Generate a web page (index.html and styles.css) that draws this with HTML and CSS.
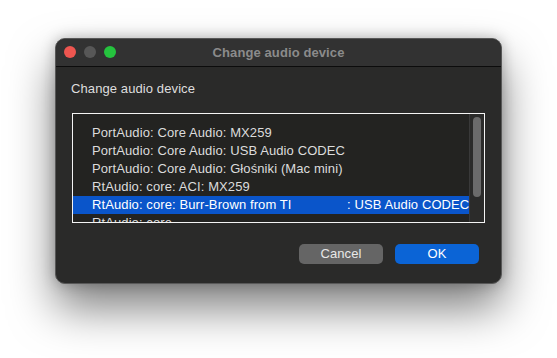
FILE: index.html
```html
<!DOCTYPE html>
<html lang="en">
<head>
    <meta charset="UTF-8">
    <title>Change audio device</title>
    <link rel="stylesheet" href="styles.css">
</head>
<body>
<div class="window">
    <div class="titlebar">
        <div class="lights">
            <span class="light close"></span>
            <span class="light min"></span>
            <span class="light zoom"></span>
        </div>
        <div class="title">Change audio device</div>
    </div>
    <div class="content">
        <div class="label">Change audio device</div>
        <div class="listbox">
            <ul class="list">
                <li>PortAudio: Core Audio: MX259</li>
                <li>PortAudio: Core Audio: USB Audio CODEC</li>
                <li>PortAudio: Core Audio: Głośniki (Mac mini)</li>
                <li>RtAudio: core: ACI: MX259</li>
                <li class="selected"><span class="col">RtAudio: core: Burr-Brown from TI</span>: USB Audio CODEC</li>
                <li>RtAudio: core</li>
            </ul>
            <div class="track"><div class="thumb"></div></div>
        </div>
        <div class="buttons">
            <a href="javascript:;" class="btn cancel">Cancel</a>
            <a href="javascript:;" class="btn ok">OK</a>
        </div>
    </div>
</div>
</body>
</html>
```

FILE: styles.css
```css
* {
    margin: 0;
    padding: 0;
    box-sizing: border-box;
}

ul {
    list-style: none;
}

a {
    text-decoration: none;
}

html, body {
    height: 100%;
}

body {
    background: #fff;
    font-family: "Liberation Sans", Arial, sans-serif;
    font-size: 13px;
    letter-spacing: 0.1px;
    padding: 38px 0 0 55px;
}

.window {
    width: 447px;
    height: 246px;
    background: #2a2a29;
    border: 1px solid #585858;
    border-radius: 10px;
    box-shadow: 0 24px 45px rgba(0, 0, 0, 0.5), 0 0 14px rgba(0, 0, 0, 0.25);
    overflow: hidden;
}

.titlebar {
    height: 28px;
    background: #323232;
    border-bottom: 1px solid #0c0c0c;
    display: flex;
    align-items: center;
    position: relative;
}

.lights {
    display: flex;
    gap: 8px;
    padding-left: 8px;
    position: absolute;
    top: 7px;
}

.light {
    width: 12px;
    height: 12px;
    border-radius: 50%;
}

.close {
    background: #ee5650;
}

.min {
    background: #575757;
}

.zoom {
    background: #25c33e;
}

.title {
    flex: 1;
    text-align: center;
    font-weight: bold;
    color: #8b8b8b;
}

.content {
    padding: 14px 22px 0 15px;
}

.label {
    color: #dedede;
    line-height: 16px;
}

.listbox {
    margin: 16px 0 0 1px;
    width: 413px;
    height: 110px;
    border: 1px solid #f4f4f4;
    background: #232321;
    display: flex;
    overflow: hidden;
}

.list {
    flex: 1;
    padding-top: 10px;
}

.list li {
    height: 18px;
    line-height: 18px;
    padding-left: 19px;
    color: #dcdcdc;
    white-space: nowrap;
    overflow: hidden;
}

.list li.selected {
    background: #0a55ca;
    color: #fff;
}

.col {
    display: inline-block;
    width: 255px;
}

.track {
    width: 15px;
    background: #2b2b2a;
    border-left: 1px solid #393939;
    padding: 3px 0 0 3px;
}

.thumb {
    width: 8px;
    height: 80px;
    border-radius: 4px;
    background: #6b6b6b;
}

.buttons {
    display: flex;
    justify-content: flex-end;
    gap: 12px;
    margin-top: 21px;
}

.btn {
    width: 84px;
    height: 20px;
    line-height: 20px;
    border-radius: 5px;
    text-align: center;
    color: #e8e8e8;
}

.cancel {
    background: #656565;
}

.ok {
    background: #0b64d6;
    color: #fff;
}
```
